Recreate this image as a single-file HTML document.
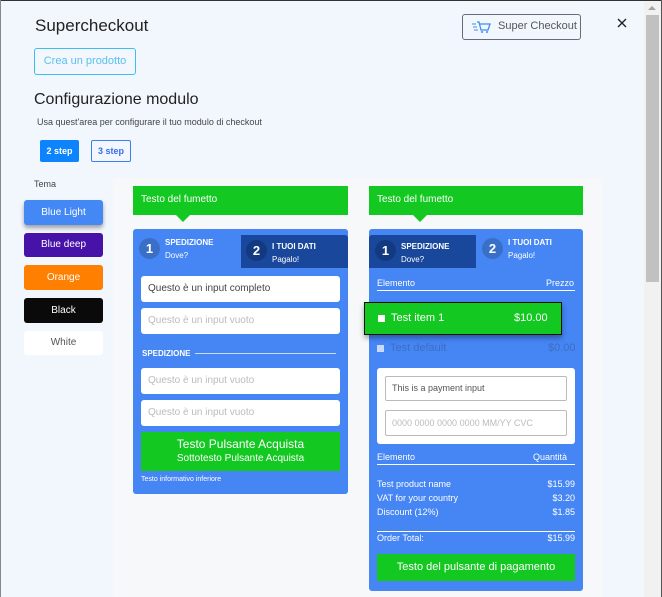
<!DOCTYPE html>
<html><head><meta charset="utf-8"><style>
*{box-sizing:border-box;margin:0;padding:0}
body{width:662px;height:597px;overflow:hidden;background:#f2f7fe;font-family:"Liberation Sans",sans-serif;position:relative;color:#222}
.a{position:absolute}
.t{white-space:nowrap}
.inp{position:absolute;background:#fff;border-radius:3px;font-size:10px;color:#bbb;padding-left:7px;line-height:26px}
.th{position:absolute;left:113px;top:178px;width:490px;height:419px;background:#f6f8fa}
.bub{position:absolute;background:#13c820;color:#fff;font-size:10px;padding:8px 0 0 8px;height:29px}
.card{position:absolute;background:#4585f4;border-radius:3px}
.circ{position:absolute;width:21px;height:21px;border-radius:50%;color:#fff;font-weight:bold;font-size:13px;text-align:center;line-height:21px}
.tt{position:absolute;color:#fff;font-size:8px;font-weight:bold;line-height:13px}
.tt span{font-weight:normal}
.w{color:#fff;font-size:10px}
.btn{position:absolute;color:#fff;font-size:10px;text-align:center;border-radius:3px}
</style></head><body>
<div class="a" style="left:0;top:0;width:662px;height:1px;background:#333"></div>
<div class="a" style="left:0;top:0;width:1px;height:597px;background:#888"></div>
<div class="a" style="left:644px;top:1px;width:17px;height:596px;background:#f1f1f1"></div>
<div class="a" style="left:646px;top:15px;width:13px;height:267px;background:#c1c1c1"></div>
<div class="a" style="left:661px;top:0;width:1px;height:597px;background:#555"></div>
<div class="a" style="left:648px;top:6px;border-left:4px solid transparent;border-right:4px solid transparent;border-bottom:4px solid #a3a3a3"></div>

<div class="a t" style="left:35px;top:16px;font-size:17px;color:#222">Supercheckout</div>
<div class="a" style="left:462px;top:14px;width:119px;height:26px;border:1px solid #666c78;border-radius:3px"></div>
<svg class="a" style="left:471px;top:20px" width="20" height="14" viewBox="0 0 20 14"><path d="M6 2h2l2 8h7l2-6H9" fill="none" stroke="#3f8cf0" stroke-width="1.3"/><path d="M1 4h4M2 7h4M3 10h4" stroke="#3f8cf0" stroke-width="1"/><circle cx="11" cy="12" r="1" fill="#3f8cf0"/><circle cx="16" cy="12" r="1" fill="#3f8cf0"/></svg>
<div class="a t" style="left:498px;top:20px;font-size:11px;color:#555">Super Checkout</div>
<svg class="a" style="left:617px;top:18px" width="10" height="10" viewBox="0 0 10 10"><path d="M1 1L9 9M9 1L1 9" stroke="#222" stroke-width="1.4"/></svg>

<div class="a t" style="left:34px;top:48px;width:102px;height:27px;border:1px solid #3fbdf0;border-radius:3px;color:#5ac0ec;font-size:11px;text-align:center;line-height:25px">Crea un prodotto</div>
<div class="a t" style="left:34px;top:91px;font-size:16px;color:#222">Configurazione modulo</div>
<div class="a t" style="left:37px;top:117px;font-size:9px;color:#444">Usa quest'area per configurare il tuo modulo di checkout</div>
<div class="a t" style="left:40px;top:140px;width:39px;height:22px;background:#0d84fb;border-radius:2px;color:#fff;font-size:9px;font-weight:bold;text-align:center;line-height:22px">2 step</div>
<div class="a t" style="left:91px;top:140px;width:40px;height:22px;border:1px solid #3c7ff0;border-radius:2px;color:#3a6ef0;font-size:9px;font-weight:bold;text-align:center;line-height:20px">3 step</div>

<div class="a t" style="left:34px;top:179px;font-size:9px;color:#444">Tema</div>
<div class="btn t" style="left:24px;top:200px;width:79px;height:25px;line-height:25px;background:#4488f5;box-shadow:0 3px 4px rgba(0,0,0,.35)">Blue Light</div>
<div class="btn t" style="left:24px;top:233px;width:79px;height:24px;line-height:24px;background:#4612a8">Blue deep</div>
<div class="btn t" style="left:24px;top:265px;width:79px;height:25px;line-height:25px;background:#ff7f00">Orange</div>
<div class="btn t" style="left:24px;top:298px;width:79px;height:25px;line-height:25px;background:#0a0a0a">Black</div>
<div class="btn t" style="left:24px;top:331px;width:79px;height:24px;line-height:24px;background:#fff;color:#555">White</div>

<div class="th"></div>

<!-- left preview -->
<div class="bub t" style="left:133px;top:186px;width:215px">Testo del fumetto</div>
<div class="a" style="left:176px;top:215px;border-left:7px solid transparent;border-right:7px solid transparent;border-top:7px solid #13c820"></div>
<div class="card" style="left:133px;top:229px;width:215px;height:265px"></div>
<div class="a" style="left:241px;top:235px;width:107px;height:33px;background:#18479c;border-top-right-radius:3px"></div>
<div class="circ" style="left:139px;top:238px;background:#3a6fc8">1</div>
<div class="tt t" style="left:165px;top:236px">SPEDIZIONE<br><span>Dove?</span></div>
<div class="circ" style="left:246px;top:240px;background:#133a80">2</div>
<div class="tt t" style="left:272px;top:240px">I TUOI DATI<br><span>Pagalo!</span></div>
<div class="inp t" style="left:141px;top:276px;width:199px;color:#444">Questo è un input completo</div>
<div class="inp t" style="left:141px;top:308px;width:199px">Questo è un input vuoto</div>
<div class="a t" style="left:142px;top:349px;color:#fff;font-size:8px;font-weight:bold">SPEDIZIONE</div>
<div class="a" style="left:195px;top:353px;width:141px;height:1px;background:#c8dafc"></div>
<div class="inp t" style="left:141px;top:368px;width:199px">Questo è un input vuoto</div>
<div class="inp t" style="left:141px;top:400px;width:199px">Questo è un input vuoto</div>
<div class="a t" style="left:141px;top:432px;width:199px;height:39px;background:#13c820;color:#fff;text-align:center"><div style="font-size:12px;margin-top:5px">Testo Pulsante Acquista</div><div style="font-size:10px;margin-top:2px">Sottotesto Pulsante Acquista</div></div>
<div class="a t" style="left:141px;top:476px;color:#fff;font-size:7px">Testo informativo inferiore</div>

<!-- right preview -->
<div class="bub t" style="left:369px;top:186px;width:214px">Testo del fumetto</div>
<div class="a" style="left:413px;top:215px;border-left:7px solid transparent;border-right:7px solid transparent;border-top:7px solid #13c820"></div>
<div class="card" style="left:369px;top:229px;width:214px;height:362px"></div>
<div class="a" style="left:369px;top:235px;width:107px;height:33px;background:#18479c;border-top-left-radius:3px"></div>
<div class="circ" style="left:375px;top:240px;background:#133a80">1</div>
<div class="tt t" style="left:401px;top:240px">SPEDIZIONE<br><span>Dove?</span></div>
<div class="circ" style="left:482px;top:238px;background:#3a6fc8">2</div>
<div class="tt t" style="left:508px;top:236px">I TUOI DATI<br><span>Pagalo!</span></div>
<div class="a t w" style="left:377px;top:278px;font-size:9px">Elemento</div>
<div class="a t w" style="left:546px;top:278px;font-size:9px">Prezzo</div>
<div class="a" style="left:377px;top:290px;width:198px;height:1px;background:#fff"></div>
<div class="a" style="left:364px;top:302px;width:198px;height:33px;background:#13c820;border:1px solid #111;box-shadow:0 3px 5px rgba(0,0,0,.35)"></div>
<div class="a" style="left:378px;top:315px;width:7px;height:7px;background:#fff"></div>
<div class="a t" style="left:391px;top:312px;color:#fff;font-size:11px">Test item 1</div>
<div class="a t" style="left:514px;top:312px;color:#fff;font-size:11px">$10.00</div>
<div class="a" style="left:377px;top:345px;width:7px;height:7px;background:#c8dafc"></div>
<div class="a t" style="left:390px;top:342px;color:#3d6fc0;font-size:11px">Test default</div>
<div class="a t" style="left:548px;top:342px;color:#3d6fc0;font-size:11px">$0.00</div>
<div class="a" style="left:377px;top:368px;width:198px;height:76px;background:#fff;border-radius:3px"></div>
<div class="a t" style="left:385px;top:376px;width:182px;height:25px;border:1px solid #bbb;border-radius:2px;font-size:9px;color:#555;padding-left:6px;line-height:23px">This is a payment input</div>
<div class="a t" style="left:385px;top:410px;width:182px;height:26px;border:1px solid #bbb;border-radius:2px;font-size:9px;color:#bbb;padding-left:6px;line-height:24px">0000 0000 0000 0000 MM/YY CVC</div>
<div class="a t w" style="left:377px;top:452px;font-size:9px">Elemento</div>
<div class="a t w" style="left:533px;top:452px;font-size:9px">Quantità</div>
<div class="a" style="left:377px;top:464px;width:198px;height:1px;background:#fff"></div>
<div class="a t w" style="left:377px;top:477px;font-size:9px;line-height:14px">Test product name<br>VAT for your country<br>Discount (12%)</div>
<div class="a t w" style="left:530px;top:477px;width:45px;text-align:right;font-size:9px;line-height:14px">$15.99<br>$3.20<br>$1.85</div>
<div class="a" style="left:377px;top:531px;width:198px;height:1px;background:#fff"></div>
<div class="a t w" style="left:377px;top:533px;font-size:9px">Order Total:</div>
<div class="a t w" style="left:530px;top:533px;width:45px;text-align:right;font-size:9px">$15.99</div>
<div class="a t" style="left:377px;top:554px;width:198px;height:27px;background:#13c820;color:#fff;font-size:11px;text-align:center;line-height:27px">Testo del pulsante di pagamento</div>
</body></html>
